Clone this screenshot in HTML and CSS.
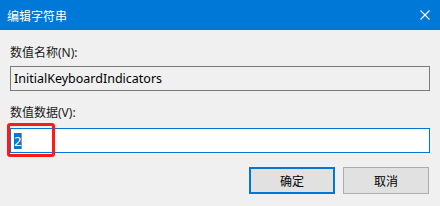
FILE: index.html
```html
<!DOCTYPE html>
<html lang="zh-CN">
<head>
    <meta charset="UTF-8">
    <title>编辑字符串</title>
    <link rel="stylesheet" href="styles.css">
</head>
<body>

    <!-- Title Bar -->
    <div class="title-bar">
        <span class="title-text">编辑字符串</span>
        <svg class="close-icon" width="10" height="10" viewBox="0 0 10 10">
            <path d="M0.5 0.5 L9.5 9.5 M9.5 0.5 L0.5 9.5" stroke="#fff" stroke-width="1.1" fill="none"/>
        </svg>
    </div>

    <div class="dialog-body">
        <label class="field-label">数值名称(N):</label>
        <div class="text-box readonly">InitialKeyboardIndicators</div>

        <label class="field-label second">数值数据(V):</label>
        <div class="text-box active">
            <span class="selected">2</span><span class="caret"></span>
            <div class="highlight"></div>
        </div>

        <div class="buttons">
            <button class="btn default">确定</button>
            <button class="btn">取消</button>
        </div>
    </div>

</body>
</html>
```

FILE: styles.css
```css
body {
    margin: 0;
    background-color: #f0f0f0;
    font-family: "Noto Sans", "Noto Sans CJK SC", sans-serif;
    font-size: 12px;
    color: #000;
}

.title-bar {
    height: 30px;
    background-color: #0078d7;
    color: #fff;
    display: flex;
    align-items: center;
    justify-content: space-between;
    padding: 0 10px 0 7px;
}

.title-text {
    font-family: "Noto Sans CJK SC", sans-serif;
    font-size: 12px;
    margin-top: 1px;
}

.close-icon {
    display: block;
}

.dialog-body {
    padding: 15px 10px 0 10px;
    display: flex;
    flex-direction: column;
}

.field-label {
    line-height: 16px;
    height: 16px;
    margin-bottom: 5px;
    color: #1a1a1a;
}

.field-label.second {
    margin-top: 14px;
    margin-bottom: 7px;
}

.text-box {
    height: 25px;
    box-sizing: border-box;
    padding: 0 3px;
    display: flex;
    align-items: center;
    font-size: 12.5px;
}

.text-box.readonly {
    border: 1px solid #7a7a7a;
    background-color: #f0f0f0;
}

.text-box.active {
    position: relative;
    border: 1px solid #0078d7;
    background-color: #fff;
}

.selected {
    background-color: #0078d7;
    color: #fff;
    font-size: 13px;
    line-height: 16px;
}

.caret {
    width: 1px;
    height: 16px;
    background-color: #d08a50;
}

/* red annotation around the value */
.highlight {
    position: absolute;
    left: -4px;
    top: -6px;
    width: 48px;
    height: 34px;
    box-sizing: border-box;
    border: 3px solid #ff1a1a;
    border-radius: 3px;
}

.buttons {
    display: flex;
    justify-content: flex-end;
    gap: 8px;
    margin-top: 14px;
    padding-right: 1px;
}

.btn {
    width: 86px;
    height: 27px;
    box-sizing: border-box;
    background-color: #e1e1e1;
    border: 1px solid #adadad;
    font-family: "Noto Sans CJK SC", sans-serif;
    font-size: 12px;
    color: #000;
    padding: 0;
}

.btn.default {
    border: 2px solid #0078d7;
}
```
